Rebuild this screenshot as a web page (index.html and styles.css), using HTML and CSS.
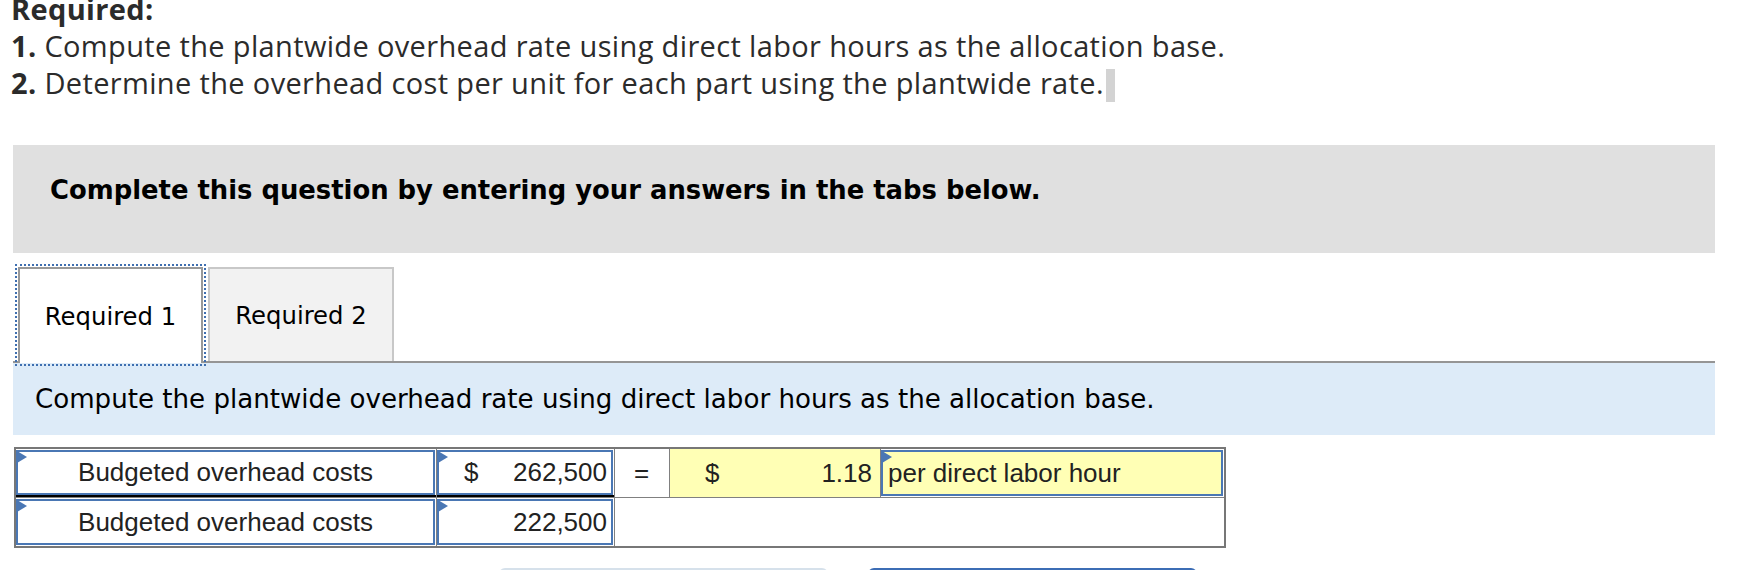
FILE: index.html
```html
<!DOCTYPE html>
<html lang="en">
<head>
    <meta charset="UTF-8">
    <title>Plantwide Overhead Rate</title>
    <link rel="stylesheet" href="styles.css">
</head>
<body>
    <div class="required">
        <p class="req-title">Required:</p>
        <p><b>1.</b> Compute the plantwide overhead rate using direct labor hours as the allocation base.</p>
        <p><b>2.</b> Determine the overhead cost per unit for each part using the plantwide rate.<span class="cursor"></span></p>
    </div>

    <div class="question">
        <div class="instructions">Complete this question by entering your answers in the tabs below.</div>

        <div class="tabs">
            <div class="tab active">Required 1</div>
            <div class="tab">Required 2</div>
        </div>

        <div class="prompt">Compute the plantwide overhead rate using direct labor hours as the allocation base.</div>

        <div class="calc">
            <div class="cell numer"><div class="field label">Budgeted overhead costs</div></div>
            <div class="cell numer"><div class="field amount"><span>$</span><span>262,500</span></div></div>
            <div class="cell equals">=</div>
            <div class="cell result"><span>$</span><span>1.18</span></div>
            <div class="cell"><div class="field unit">per direct labor hour</div></div>

            <div class="cell"><div class="field label">Budgeted overhead costs</div></div>
            <div class="cell"><div class="field amount"><span></span><span>222,500</span></div></div>
            <div class="cell blank"></div>
        </div>

        <div class="buttons">
            <button class="btn btn-prev"></button>
            <button class="btn btn-next"></button>
        </div>
    </div>
</body>
</html>
```

FILE: styles.css
```css
* {
    box-sizing: border-box;
}

body {
    margin: 0;
    background-color: white;
    overflow: hidden;
}

.required {
    margin-top: -10px;
    padding-left: 11px;
    font-family: 'Open Sans', Lato, sans-serif;
    font-size: 29px;
    line-height: 37px;
    letter-spacing: 0.35px;
    color: #2b2b2b;
}

.required p {
    margin: 0;
}

.req-title {
    font-weight: 700;
}

.cursor {
    display: inline-block;
    width: 9px;
    height: 33px;
    margin-left: 2px;
    vertical-align: -8px;
    background-color: #d3d3d3;
}

.question {
    margin: 43px 39px 0 13px;
    font-family: 'DejaVu Sans', Verdana, sans-serif;
    color: #000;
}

.instructions {
    height: 108px;
    padding: 30px 0 0 37px;
    background-color: #e0e0e0;
    font-size: 25.85px;
    font-weight: 700;
    line-height: 30px;
}

.tabs {
    display: flex;
    align-items: flex-end;
    gap: 5px;
    margin-top: 14px;
    padding-left: 5px;
    border-bottom: 2px solid #959595;
}

.tab {
    width: 186px;
    height: 94px;
    display: flex;
    align-items: center;
    justify-content: center;
    font-size: 24.3px;
    background-color: #f2f2f2;
    border: 2px solid #c8c8c8;
    border-bottom: none;
}

.tab.active {
    width: 185px;
    height: 96px;
    margin-bottom: -2px;
    background-color: white;
    border-color: #999;
    outline: 2px dotted #3f6fb0;
    outline-offset: 1px;
}

.prompt {
    height: 72px;
    padding-left: 22px;
    display: flex;
    align-items: center;
    background-color: #ddebf8;
    font-size: 26.1px;
}

.calc {
    display: grid;
    grid-template-columns: 420px 177px 54px 210px 343px;
    grid-auto-rows: 48px;
    gap: 1px;
    width: fit-content;
    margin: 12px 0 0 1px;
    background-color: #808080;
    border: 2px solid #777;
    font-family: 'Liberation Sans', Arial, sans-serif;
    font-size: 26px;
    color: #222;
}

.cell {
    background-color: white;
    padding: 1px 1px 1px 0;
}

.cell.numer {
    border-bottom: 2px solid #000;
    padding-bottom: 0;
}

.field {
    position: relative;
    height: 100%;
    border: 2px solid #4a77b4;
    display: flex;
    align-items: center;
}

.field::before {
    content: "";
    position: absolute;
    left: -1px;
    top: -1px;
    border-left: 10px solid #4a77b4;
    border-top: 6px solid transparent;
    border-bottom: 6px solid transparent;
}

.label {
    justify-content: center;
}

.amount {
    justify-content: space-between;
    padding: 0 4px 0 25px;
}

.equals {
    display: flex;
    align-items: center;
    justify-content: center;
}

.result {
    display: flex;
    align-items: center;
    justify-content: space-between;
    padding: 0 8px 0 35px;
    background-color: #ffffb5;
}

.unit {
    padding-left: 5px;
    background-color: #ffffb5;
}

.blank {
    grid-column: span 3;
}

.buttons {
    display: flex;
    gap: 40px;
    margin: 20px 0 0 486px;
}

.btn {
    width: 329px;
    height: 44px;
    border-radius: 6px;
}

.btn-prev {
    background-color: #e4ecf3;
    border: 2px solid #d6e1eb;
}

.btn-next {
    background-color: #4a77b4;
    border: 2px solid #3c6db5;
}
```
